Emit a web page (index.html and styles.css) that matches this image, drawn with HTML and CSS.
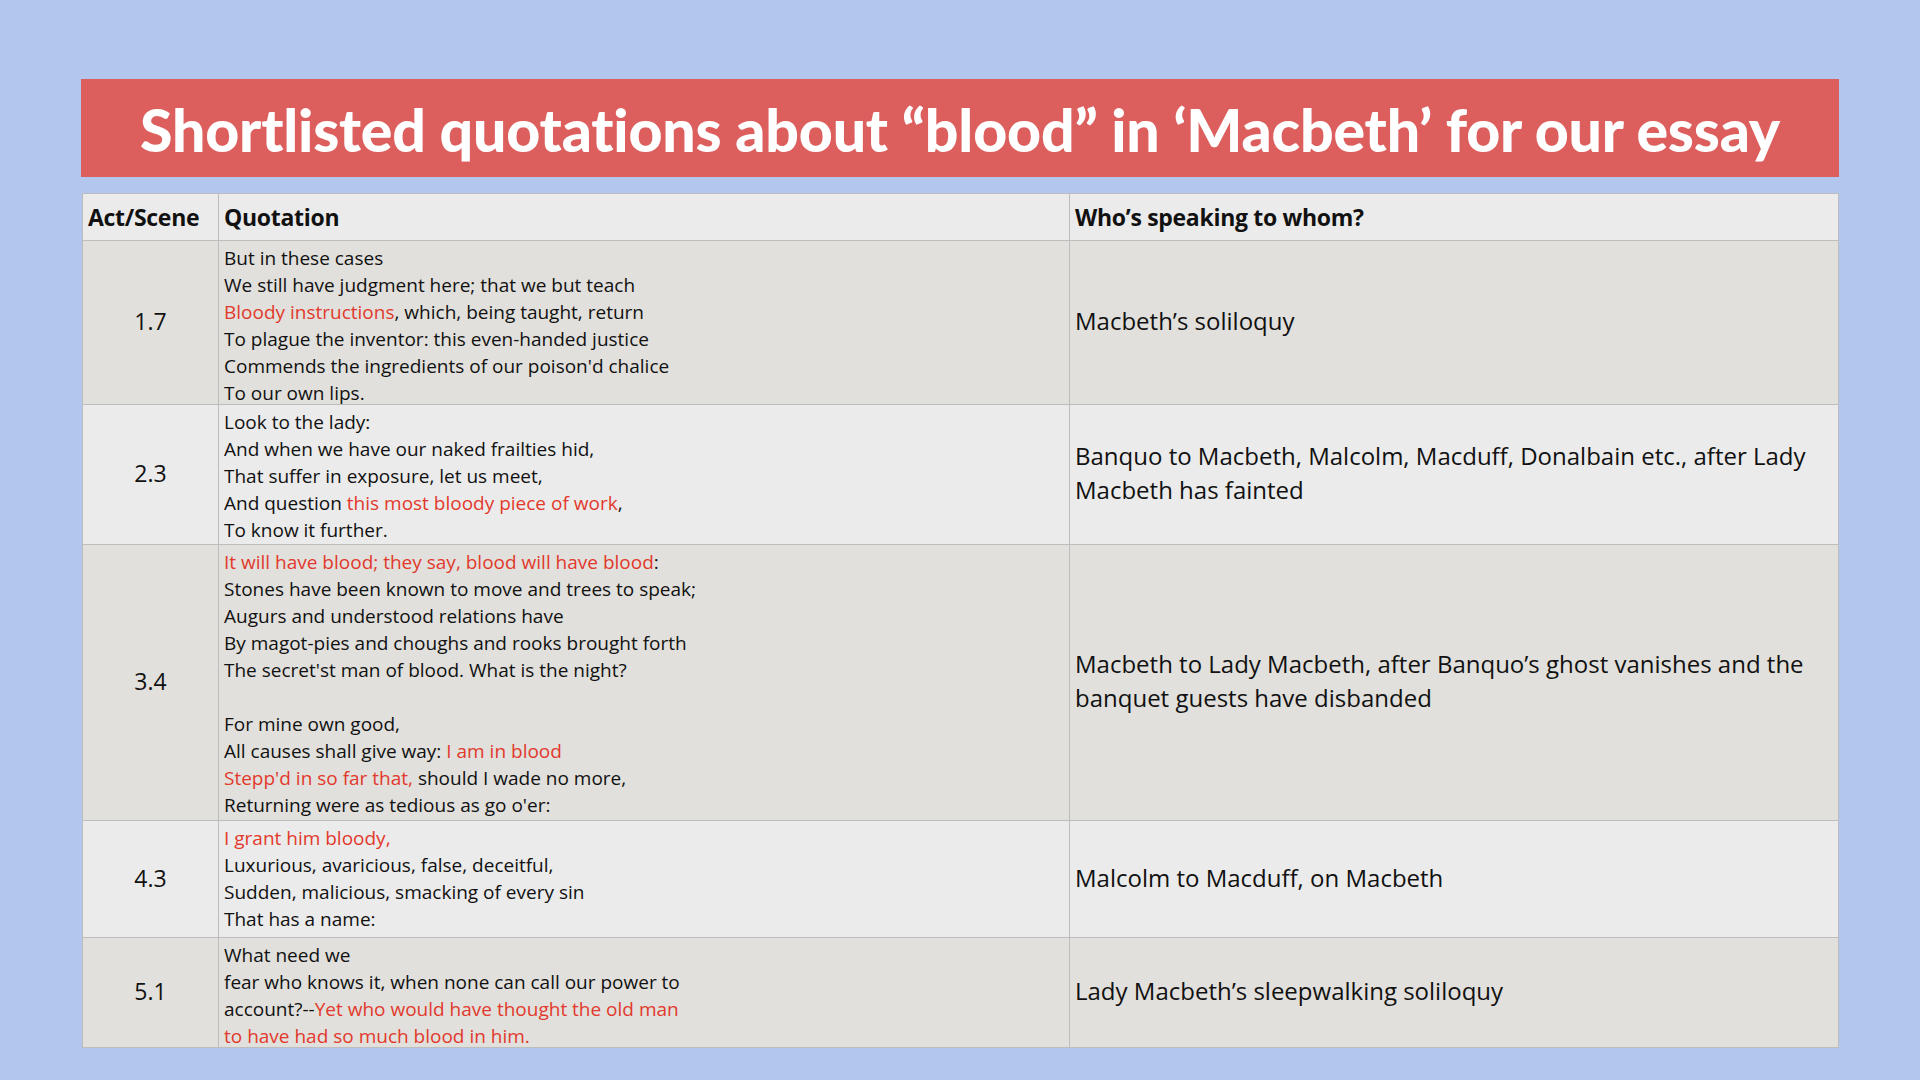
FILE: index.html
```html
<!DOCTYPE html>
<html lang="en">
<head>
<meta charset="utf-8">
<title>Shortlisted quotations about blood in Macbeth</title>
<link rel="stylesheet" href="styles.css">
</head>
<body>
<main class="slide">
  <header class="title-bar">
    <h1 class="title">Shortlisted quotations about “blood” in ‘Macbeth’ for our essay</h1>
  </header>
  <table class="quotes">
    <colgroup>
      <col class="col-scene">
      <col class="col-quote">
      <col class="col-who">
    </colgroup>
    <thead>
      <tr class="head-row">
        <th class="scene-head">Act/Scene</th>
        <th>Quotation</th>
        <th>Who’s speaking to whom?</th>
      </tr>
    </thead>
    <tbody>
      <tr class="row row-a r1">
        <td class="scene">1.7</td>
        <td class="quote"><div class="lines">But in these cases<br>We still have judgment here; that we but teach<br><span class="red">Bloody instructions</span>, which, being taught, return<br>To plague the inventor: this even-handed justice<br>Commends the ingredients of our poison'd chalice<br>To our own lips.</div></td>
        <td class="who">Macbeth’s soliloquy</td>
      </tr>
      <tr class="row row-b r2">
        <td class="scene">2.3</td>
        <td class="quote"><div class="lines">Look to the lady:<br>And when we have our naked frailties hid,<br>That suffer in exposure, let us meet,<br>And question <span class="red">this most bloody piece of work</span>,<br>To know it further.</div></td>
        <td class="who">Banquo to Macbeth, Malcolm, Macduff, Donalbain etc., after Lady Macbeth has fainted</td>
      </tr>
      <tr class="row row-a r3">
        <td class="scene">3.4</td>
        <td class="quote"><div class="lines"><span class="red">It will have blood; they say, blood will have blood</span>:<br>Stones have been known to move and trees to speak;<br>Augurs and understood relations have<br>By magot-pies and choughs and rooks brought forth<br>The secret'st man of blood. What is the night?<br><br>For mine own good,<br>All causes shall give way: <span class="red">I am in blood</span><br><span class="red">Stepp'd in so far that,</span> should I wade no more,<br>Returning were as tedious as go o'er:</div></td>
        <td class="who">Macbeth to Lady Macbeth, after Banquo’s ghost vanishes and the banquet guests have disbanded</td>
      </tr>
      <tr class="row row-b r4">
        <td class="scene">4.3</td>
        <td class="quote"><div class="lines"><span class="red">I grant him bloody,</span><br>Luxurious, avaricious, false, deceitful,<br>Sudden, malicious, smacking of every sin<br>That has a name:</div></td>
        <td class="who">Malcolm to Macduff, on Macbeth</td>
      </tr>
      <tr class="row row-a r5">
        <td class="scene">5.1</td>
        <td class="quote"><div class="lines">What need we<br>fear who knows it, when none can call our power to<br>account?--<span class="red">Yet who would have thought the old man<br>to have had so much blood in him.</span></div></td>
        <td class="who">Lady Macbeth’s sleepwalking soliloquy</td>
      </tr>
    </tbody>
  </table>
</main>
</body>
</html>
```

FILE: styles.css
```css
* { box-sizing: border-box; }

html, body {
  margin: 0;
  padding: 0;
}

body {
  width: 1920px;
  height: 1080px;
  background: #b3c7ee;
  font-family: "Open Sans", Lato, "Liberation Sans", sans-serif;
  color: #111;
  overflow: hidden;
}

.slide {
  padding: 79px 0 0 81px;
  width: 1920px;
}

.title-bar {
  width: 1758px;
  height: 98px;
  background: #dc5f5e;
  display: flex;
  align-items: center;
  justify-content: center;
}

.title {
  margin: 0;
  color: #fff;
  font-family: Lato, sans-serif;
  font-weight: 900;
  font-size: 59px;
  letter-spacing: -0.2px;
  line-height: 1;
  white-space: nowrap;
  padding-top: 2px;
}

.quotes {
  margin-top: 16px;
  margin-left: 1px;
  width: 1756px;
  border-collapse: collapse;
  table-layout: fixed;
  border: 1.5px solid #929cab;
}

.col-scene { width: 136px; }
.col-quote { width: 851px; }
.col-who { width: 769px; }

.quotes th,
.quotes td {
  border: 1px solid #bdbdbd;
  padding: 0 5px;
}

.head-row {
  height: 47px;
  background: #ebebeb;
}

.quotes th {
  text-align: left;
  font-weight: 700;
  font-size: 23px;
  letter-spacing: -0.3px;
  vertical-align: middle;
  padding-bottom: 1px;
}

.row-a { background: #e1e0dc; }
.row-b { background: #ebebeb; }

.r1 { height: 164px; }
.r2 { height: 140px; }
.r3 { height: 276px; }
.r4 { height: 117px; }
.r5 { height: 110px; }

.quotes td.scene {
  text-align: center;
  font-size: 23px;
  vertical-align: middle;
  padding-bottom: 3px;
}

.quotes td.quote {
  vertical-align: top;
  font-size: 19px;
  line-height: 27px;
  padding-top: 4px;
}

.lines {
  margin-bottom: -4px;
}

.quotes td.who {
  vertical-align: middle;
  font-size: 24px;
  line-height: 34px;
  padding-bottom: 3px;
}

.red { color: #e2392c; }
```
